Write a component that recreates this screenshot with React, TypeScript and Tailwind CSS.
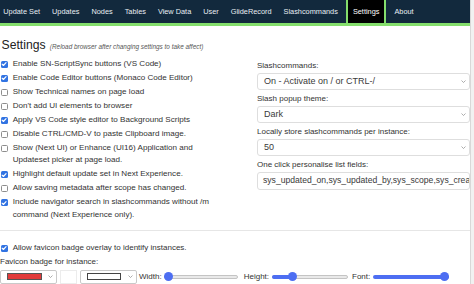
import React from 'react';

const NAV = ['Update Set', 'Updates', 'Nodes', 'Tables', 'View Data', 'User', 'GlideRecord', 'Slashcommands'];

const OPTIONS: { lines: string[]; checked: boolean }[] = [
  { lines: ['Enable SN-ScriptSync buttons (VS Code)'], checked: true },
  { lines: ['Enable Code Editor buttons (Monaco Code Editor)'], checked: true },
  { lines: ['Show Technical names on page load'], checked: false },
  { lines: ["Don't add UI elements to browser"], checked: false },
  { lines: ['Apply VS Code style editor to Background Scripts'], checked: true },
  { lines: ['Disable CTRL/CMD-V to paste Clipboard image.'], checked: false },
  { lines: ['Show (Next UI) or Enhance (UI16) Application and', 'Updateset picker at page load.'], checked: false },
  { lines: ['Highlight default update set in Next Experience.'], checked: true },
  { lines: ['Allow saving metadata after scope has changed.'], checked: false },
  { lines: ['Include navigator search in slashcommands without /m', 'command (Next Experience only).'], checked: true },
];

const Check = ({ checked }: { checked: boolean }) =>
  checked ? (
    <span className="mt-[2.75px] ml-[0.5px] flex h-[7px] w-[7px] shrink-0 items-center justify-center rounded-[1.5px] bg-[#3173e2]">
      <svg viewBox="0 0 10 10" className="h-[6px] w-[6px]">
        <path d="M1.8 5.3l2.2 2.2L8.4 2.6" stroke="white" strokeWidth="1.9" fill="none" strokeLinecap="round" strokeLinejoin="round" />
      </svg>
    </span>
  ) : (
    <span className="mt-[2.75px] ml-[0.5px] h-[7px] w-[7px] shrink-0 rounded-[1.5px] border border-[#8d8d8d] bg-white" />
  );

const Chevron = () => (
  <svg viewBox="0 0 10 6" className="h-[3px] w-[5px]">
    <path d="M1 1l4 4 4-4" stroke="#8a8a8a" strokeWidth="1.4" fill="none" />
  </svg>
);

const Select = ({ value }: { value: string }) => (
  <div className="flex h-[17.5px] items-center justify-between rounded-[3px] border border-[#dedede] bg-white pl-[6px] pr-[3px] text-[9px] text-[#3a3a3a]">
    <span>{value}</span>
    <Chevron />
  </div>
);

const Label = ({ children }: { children: React.ReactNode }) => (
  <div className="mt-[3px] mb-[0.5px] text-[8px] leading-[12px] text-[#333]">{children}</div>
);

export default function App() {
  return (
    <div className="flex h-[284px] w-[474px] overflow-hidden bg-white font-['Liberation_Sans',Arial,sans-serif] text-[#333]">
      <div className="w-[470px] shrink-0">
        {/* Nav */}
        <nav className="flex h-[26px] border-b-[3px] border-[#84de6c] bg-[#12293d] text-[7.35px] text-[#e8eef3]">
          <div className="ml-[-2.7px] flex">
            {NAV.map((item) => (
              <span key={item} className="flex items-center px-[6px]">
                {item}
              </span>
            ))}
            <span className="mx-[2px] flex items-center border-x-2 border-[#84de6c] bg-black px-[5px] text-white">Settings</span>
            <span className="flex items-center px-[6px]">About</span>
          </div>
        </nav>

        {/* Heading */}
        <div className="mt-[11.5px] flex items-baseline pl-[1.5px] leading-[14px]">
          <h1 className="text-[12.2px] text-[#222]">Settings</h1>
          <span className="ml-[4.3px] text-[6.4px] italic text-[#555]">(Reload browser after changing settings to take affect)</span>
        </div>

        <div className="mt-[4.3px] flex items-start">
          {/* Checkboxes */}
          <div className="flex w-[240px] shrink-0 flex-col gap-[1.5px]">
            {OPTIONS.map((o) => (
              <div key={o.lines[0]} className="flex items-start gap-[5.2px] text-[8.08px] leading-[12.5px]">
                <Check checked={o.checked} />
                <span>
                  {o.lines.map((l, i) => (
                    <React.Fragment key={l}>
                      {i > 0 && <br />}
                      {l}
                    </React.Fragment>
                  ))}
                </span>
              </div>
            ))}
          </div>

          {/* Right column */}
          <div className="ml-[17px] mt-[-0.8px] w-[213px] shrink-0">
            <Label>Slashcommands:</Label>
            <Select value="On - Activate on / or CTRL-/" />
            <Label>Slash popup theme:</Label>
            <Select value="Dark" />
            <Label>Locally store slashcommands per instance:</Label>
            <Select value="50" />
            <Label>One click personalise list fields:</Label>
            <div className="flex h-[18px] items-center overflow-hidden whitespace-nowrap rounded-[3px] border border-[#dedede] bg-white pl-[5px] text-[8.6px] text-[#3a3a3a]">
              sys_updated_on,sys_updated_by,sys_scope,sys_crea
            </div>
          </div>
        </div>

        <div className="mt-[8.5px] border-t border-[#e6e6e6]" />

        {/* Favicon badge */}
        <div className="mt-[11px] flex items-start gap-[5.2px] text-[8px] leading-[12.5px]">
          <Check checked />
          <span>Allow favicon badge overlay to identify instances.</span>
        </div>
        <div className="mt-[1.5px] text-[8px] leading-[12px]">Favicon badge for instance:</div>
        <div className="mt-[2px] flex h-[14px] items-center text-[8px]">
          <div className="flex h-[14px] w-[57px] items-center justify-between rounded-[2px] border border-[#c9c9c9] bg-white pl-[6px] pr-[3px]">
            <span className="h-[7px] w-[35px] border border-[#555] bg-[#e23b3b]" />
            <Chevron />
          </div>
          <div className="ml-[3px] h-[14px] w-[17px] border border-[#ececec] bg-white" />
          <div className="ml-[3px] flex h-[14px] w-[57px] items-center justify-between rounded-[2px] border border-[#c9c9c9] bg-white pl-[6px] pr-[3px]">
            <span className="h-[7px] w-[34px] border border-[#444] bg-white" />
            <Chevron />
          </div>
          <span className="ml-[2px]">Width:</span>
          <div className="relative ml-[2px] flex h-[9px] w-[74px] items-center">
            <div className="h-[3.5px] w-full rounded-full border border-[#c4c4c4] bg-[#e9e9e9]" />
            <span className="absolute left-0 top-0 h-[9px] w-[9px] rounded-full bg-[#4d6ef2]" />
          </div>
          <span className="ml-[6px]">Height:</span>
          <div className="relative ml-[3px] flex h-[9px] w-[76px] items-center">
            <div className="h-[3.5px] w-full rounded-full border border-[#c4c4c4] bg-[#e9e9e9]" />
            <div className="absolute left-0 h-[3.5px] w-[20px] rounded-full bg-[#4d6ef2]" />
            <span className="absolute left-[15.5px] top-0 h-[9px] w-[9px] rounded-full bg-[#4d6ef2]" />
          </div>
          <span className="ml-[4px]">Font:</span>
          <div className="relative ml-[3px] flex h-[9px] w-[76px] items-center">
            <div className="h-[3.5px] w-full rounded-full bg-[#4d6ef2]" />
            <span className="absolute right-0 top-0 h-[9px] w-[9px] rounded-full bg-[#4d6ef2]" />
          </div>
        </div>
      </div>
      <div className="w-[4px] shrink-0 border-l border-[#d8d8d8] bg-[#f1f1f1]" />
    </div>
  );
}
